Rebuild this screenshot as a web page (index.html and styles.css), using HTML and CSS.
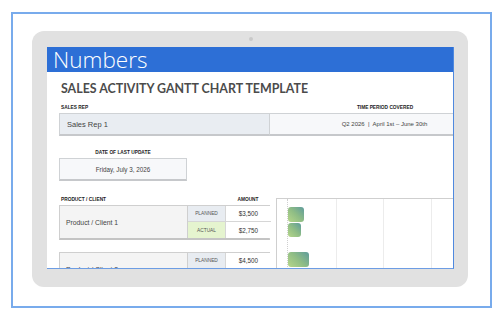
FILE: index.html
```html
<!DOCTYPE html>
<html lang="en">
<head>
    <meta charset="UTF-8">
    <meta name="viewport" content="width=device-width, initial-scale=1.0">
    <title>Sales Activity Gantt Chart Template</title>
    <link rel="stylesheet" href="styles.css">
</head>
<body>

<div class="frame">
    <div class="bezel">
        <div class="camera-strip"><span class="camera"></span></div>

        <div class="screen">
            <div class="app-header">Numbers</div>

            <div class="sheet">
                <h1 class="sheet-title">SALES ACTIVITY GANTT CHART TEMPLATE</h1>

                <!-- Rep + period -->
                <div class="info-row">
                    <div class="info-cell">
                        <div class="label">SALES REP</div>
                        <div class="box box-rep">Sales Rep 1</div>
                    </div>
                    <div class="info-cell">
                        <div class="label label-center">TIME PERIOD COVERED</div>
                        <div class="box box-period">Q2 2026 &nbsp;|&nbsp; April 1st &ndash; June 30th</div>
                    </div>
                </div>

                <!-- Last update -->
                <div class="update">
                    <div class="label label-center">DATE OF LAST UPDATE</div>
                    <div class="box box-date">Friday, July 3, 2026</div>
                </div>

                <!-- Products + gantt -->
                <div class="lower">
                    <div class="products">
                        <div class="products-head">
                            <span class="label">PRODUCT / CLIENT</span>
                            <span class="label amount-head">AMOUNT</span>
                        </div>

                        <div class="product">
                            <div class="product-name">Product / Client 1</div>
                            <div class="type type-planned">PLANNED</div>
                            <div class="amount">$3,500</div>
                            <div class="type type-actual">ACTUAL</div>
                            <div class="amount">$2,750</div>
                        </div>

                        <div class="product">
                            <div class="product-name">Product / Client 2</div>
                            <div class="type type-planned">PLANNED</div>
                            <div class="amount">$4,500</div>
                            <div class="type type-actual">ACTUAL</div>
                            <div class="amount">$4,100</div>
                        </div>
                    </div>

                    <div class="gantt">
                        <div class="gantt-col gantt-first">
                            <div class="bar bar-1"></div>
                            <div class="bar bar-2"></div>
                            <div class="bar bar-3"></div>
                        </div>
                        <div class="gantt-col"></div>
                        <div class="gantt-col"></div>
                        <div class="gantt-col"></div>
                    </div>
                </div>
            </div>
        </div>
    </div>
</div>

</body>
</html>
```

FILE: styles.css
```css
body {
    font-family: "Liberation Sans", Arial, sans-serif;
    margin: 0;
    padding: 0;
    background-color: #fff;
}
.frame {
    box-sizing: border-box;
    width: 481px;
    height: 296px;
    margin: 12px 0 0 11px;
    padding: 17px 0 0 19px;
    border: 2px solid #78abec;
}
.bezel {
    width: 436px;
    height: 256px;
    padding: 0 14px 0 15px;
    box-sizing: border-box;
    background-color: #e1e1e1;
    border-radius: 12px;
}
.camera-strip {
    height: 16px;
    display: flex;
    justify-content: center;
    align-items: center;
}
.camera {
    width: 4px;
    height: 4px;
    border-radius: 50%;
    background-color: #c9c9c9;
}
.screen {
    width: 407px;
    height: 222px;
    box-sizing: border-box;
    background-color: #fff;
    border-right: 1px solid #4f89df;
    border-bottom: 1px solid #6d9de4;
    overflow: hidden;
}
.app-header {
    height: 25px;
    background-color: #2d6fd6;
    color: #fff;
    font-family: "Open Sans", sans-serif;
    font-weight: 300;
    font-size: 22.5px;
    line-height: 26px;
    padding-left: 6px;
    overflow: hidden;
}
.sheet {
    padding-left: 12px;
    width: 450px;
}
.sheet-title {
    margin: 10px 0 0 2px;
    font-family: "Lato", sans-serif;
    font-size: 12.4px;
    line-height: 14px;
    font-weight: 700;
    color: #4b4b4b;
}
.label {
    font-size: 4.8px;
    line-height: 8px;
    font-weight: 700;
    color: #222;
    padding-left: 2px;
}
.label-center {
    text-align: center;
    padding-left: 0;
}
.box {
    box-sizing: border-box;
    height: 23px;
    border: 1px solid #cfd2d5;
    border-bottom: 2px solid #c6c8cb;
    color: #444;
    display: flex;
    align-items: center;
}
.info-row {
    display: flex;
    margin-top: 8px;
}
.info-cell .box {
    margin-top: 1px;
}
.info-cell:first-child {
    width: 211px;
}
.info-cell:last-child {
    width: 230px;
}
.box-rep {
    background-color: #e9edf2;
    font-size: 7.5px;
    padding-left: 7px;
}
.box-period {
    background-color: #f7f8fa;
    border-left: none;
    font-size: 6px;
    justify-content: center;
}
.update {
    width: 128px;
    margin-top: 13px;
}
.box-date {
    margin-top: 1px;
    background-color: #f7f8fa;
    font-size: 6.3px;
    justify-content: center;
}
.lower {
    display: flex;
    gap: 6px;
    margin-top: 15px;
}
.products {
    width: 211px;
    flex-shrink: 0;
}
.products-head {
    display: flex;
    justify-content: space-between;
    height: 9px;
}
.amount-head {
    width: 44px;
    text-align: center;
    padding-left: 0;
}
.product {
    display: grid;
    grid-template-columns: 128px 38px 45px;
    grid-template-rows: 16px 16px;
    box-sizing: border-box;
    border: 1px solid #cfcfcf;
    border-bottom: 2px solid #c4c4c4;
    margin-bottom: 12px;
}
.product-name {
    grid-row: 1 / 3;
    background-color: #f4f4f4;
    border-right: 1px solid #cfcfcf;
    font-size: 6.8px;
    color: #444;
    display: flex;
    align-items: center;
    padding-left: 6px;
}
.type {
    font-size: 4.8px;
    color: #555;
    display: flex;
    align-items: center;
    justify-content: center;
    border-right: 1px solid #d6d6d6;
}
.type-planned {
    background-color: #e8ecf1;
    border-bottom: 1px solid #d6d6d6;
}
.type-actual {
    background-color: #e5f4cf;
}
.amount {
    font-size: 6.3px;
    color: #333;
    display: flex;
    align-items: center;
    justify-content: center;
    background-color: #fff;
}
.amount:nth-child(3) {
    border-bottom: 1px solid #d6d6d6;
}
.gantt {
    flex: 1;
    height: 90px;
    margin-top: 2px;
    box-sizing: border-box;
    border: 1px solid #cfcfcf;
    padding-left: 10px;
    display: grid;
    grid-template-columns: 49px 47px 48px 1fr;
}
.gantt-col {
    border-left: 1px solid #ececec;
}
.gantt-first {
    border-left: 1px dotted #cfcfcf;
    padding-top: 8px;
}
.bar {
    height: 15px;
    border-radius: 3px;
    background: linear-gradient(45deg, #b6d68a 0%, #8fbd85 50%, #5e9b9c 100%);
}
.bar-1 {
    width: 16px;
}
.bar-2 {
    width: 13px;
    height: 14px;
    margin-top: 1px;
}
.bar-3 {
    width: 21px;
    margin-top: 15px;
}
```
